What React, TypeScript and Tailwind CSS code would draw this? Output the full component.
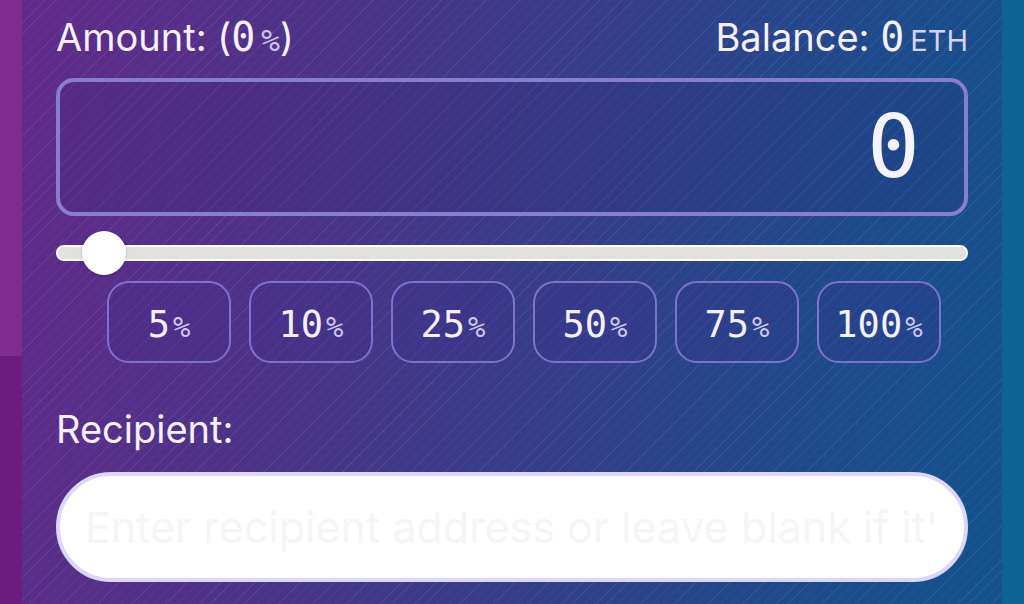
import React from "react";

const sans = { fontFamily: "Inter, 'Noto Sans', sans-serif" };
const mono = "font-['DejaVu_Sans_Mono',monospace]";

function Pct({ n }: { n: string }) {
  return (
    <button className={`w-[124px] h-[82px] rounded-[22px] border-2 border-[#7d72cc] bg-[#3a2a8a]/25 flex items-baseline justify-center pt-[22px] ${mono} text-[#f4f0ff]`}>
      <span className="text-[37px] leading-[40px]">{n}</span>
      <span className="text-[29px] leading-[40px] text-[#cfc6f2] ml-[3px]">%</span>
    </button>
  );
}

export default function App() {
  return (
    <div className="w-[1024px] h-[604px] flex overflow-hidden" style={sans}>
      <div className="w-[22px] flex flex-col">
        <div className="h-[356px] bg-[#7e2d8f]" />
        <div className="flex-1 bg-[#6d1d80]" />
      </div>
      <div className="flex-1 bg-[linear-gradient(100deg,#612a8a_0%,#4b3387_30%,#353d89_55%,#1e4a8b_80%,#13528d_100%)]">
        <div className="h-full px-[34px] bg-[repeating-linear-gradient(135deg,rgba(255,255,255,0.06)_0px,rgba(255,255,255,0.06)_1px,transparent_1px,transparent_8px)]">
          <div className="flex justify-between items-baseline pt-[15px] leading-[44px] text-[38px] text-[#f5f0ff]">
            <div className="flex items-baseline">
              <span>Amount: (</span>
              <span className={`${mono} text-[40px]`}>0</span>
              <span className={`${mono} text-[31px] text-[#cdc4f0] ml-[6px]`}>%</span>
              <span>)</span>
            </div>
            <div className="flex items-baseline">
              <span>Balance:&nbsp;</span>
              <span className={`${mono} text-[40px]`}>0</span>
              <span className="text-[29px] text-[#d7d2f2] ml-[6px]">ETH</span>
            </div>
          </div>
          <div className="mt-[15px] h-[138px] rounded-[18px] border-4 border-[#887ed0] bg-[#2c1f70]/15 flex items-center justify-end pr-[44px]">
            <span className={`${mono} text-[88px] leading-none text-[#f5f2ff]`}>0</span>
          </div>
          <div className="mt-[15px] h-[44px] relative flex items-center">
            <div className="w-full h-[16px] rounded-full bg-[#e3e1df] border-2 border-white" />
            <div className="absolute left-[26px] top-0 w-[44px] h-[44px] rounded-full bg-white shadow-[0_1px_3px_rgba(0,0,0,0.2)]" />
          </div>
          <div className="mt-[6px] ml-[51px] flex gap-[18px]">
            {["5", "10", "25", "50", "75", "100"].map((n) => (
              <Pct key={n} n={n} />
            ))}
          </div>
          <div className="mt-[44px] text-[38px] leading-[44px] text-[#f5f0ff]">Recipient:</div>
          <div className="mt-[21px] h-[110px] rounded-full border-4 border-[#ddd6fb] bg-white flex items-center pl-[25px] pr-[26px] overflow-hidden">
            <input
              className="w-full bg-transparent outline-none text-[43px] placeholder:text-[#f5f5f8] text-[#333]"
              style={sans}
              placeholder="Enter recipient address or leave blank if it's for yourself"
            />
          </div>
        </div>
      </div>
      <div className="w-[22px] bg-[#0c6394]" />
    </div>
  );
}
